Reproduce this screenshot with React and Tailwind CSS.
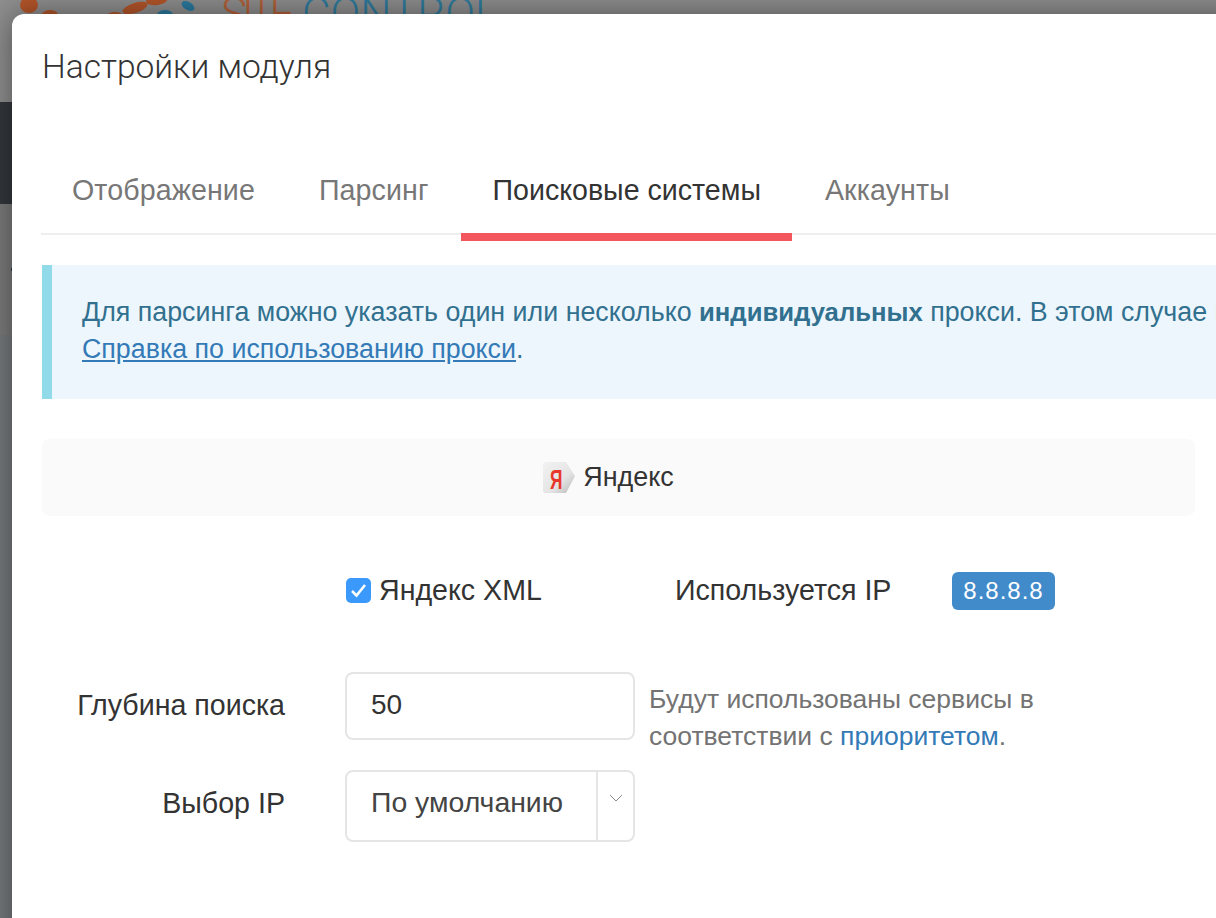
const tabs = [
  { name: "Отображение" },
  { name: "Парсинг" },
  { name: "Поисковые системы", active: true },
  { name: "Аккаунты" },
];

const YandexIcon = () => (
  <svg width="33" height="32" viewBox="0 0 33 32" className="shrink-0">
    <defs>
      <linearGradient id="tag" x1="0" y1="0" x2="1" y2="1">
        <stop offset="0" stopColor="#f2f2f2" />
        <stop offset="0.6" stopColor="#e4e4e4" />
        <stop offset="1" stopColor="#b5b5b5" />
      </linearGradient>
    </defs>
    <path d="M2 0 L23 0 L32 14 L23 31 L1 31 L0 29 L0 2 Z" fill="url(#tag)" />
    <text
      transform="translate(7 27) scale(0.62 1)"
      fontSize="28"
      fontWeight="700"
      fill="#e8382c"
      fontFamily="Liberation Sans"
    >
      Я
    </text>
  </svg>
);

export default function App() {
  return (
    <div className="relative h-[918px] w-[1216px] overflow-hidden bg-[#777a7e] font-['Liberation_Sans',sans-serif] text-[#333]">
      {/* page behind the backdrop */}
      <div className="absolute inset-x-0 top-0 h-[102px] bg-[#8f8f8f]" />
      <div className="absolute inset-x-0 top-[102px] h-[102px] bg-[#33373c]" />
      <div className="absolute inset-x-0 top-[204px] h-[131px] bg-[#7c7c7c]" />
      <svg width="200" height="20" viewBox="0 0 200 20" className="absolute left-0 top-0">
        <ellipse cx="29" cy="5" rx="9" ry="8" fill="#b5562a" />
        <ellipse cx="50" cy="15" rx="8" ry="5" fill="#b5562a" />
        <ellipse cx="115" cy="16" rx="8" ry="4" fill="#b5562a" />
        <ellipse cx="135" cy="8" rx="13" ry="5" fill="#b5562a" transform="rotate(-18 135 8)" />
        <ellipse cx="157" cy="0" rx="11" ry="5" fill="#b5562a" transform="rotate(-10 157 0)" />
        <ellipse cx="165" cy="15" rx="8" ry="5" fill="#2b7aa0" />
        <ellipse cx="188" cy="6" rx="7" ry="4" fill="#2b7aa0" transform="rotate(30 188 6)" />
      </svg>
      <div className="absolute left-[221px] top-[-8px] font-['Roboto',sans-serif] text-[44px] font-light leading-none tracking-[-5px] text-[#b5623a]">
        SITE
      </div>
      <div className="absolute left-[302px] top-[-8px] font-['Roboto',sans-serif] text-[44px] font-light leading-none text-[#2f7c9e]">
        CONTROL
      </div>
      <div className="absolute left-[11px] top-[268px] h-[3px] w-[2px] bg-[#2c3e50]" />

      <div className="absolute left-[12px] top-[14px] h-[1000px] w-[1400px] rounded-tl-[12px] bg-white pl-[30px] shadow-[0_0_32px_rgba(0,0,0,0.45)]">
        <h4 className="pt-[33px] font-['Roboto',sans-serif] text-[33.5px] font-light leading-[40px] text-[#333]">
          Настройки модуля
        </h4>

        <ul className="mt-[73px] -ml-px flex h-[75px] border-b-2 border-[#eee] text-[28.6px] leading-[40px]">
          {tabs.map((tab) => (
            <li
              key={tab.name}
              className={`mr-[2px] h-[81px] whitespace-nowrap px-[31px] pt-[10px] ${
                tab.active
                  ? "border-b-8 border-[#f4565e] text-[#333]"
                  : "tracking-[0.1px] text-[#777]"
              }`}
            >
              {tab.name}
            </li>
          ))}
        </ul>

        <div className="mt-[30px] h-[134px] border-l-[10px] border-[#90dae9] bg-[#edf6fc] pl-[30px] pt-[29px] text-[26.8px] leading-[37px] text-[#31708f]">
          <p className="whitespace-nowrap">
            Для парсинга можно указать один или несколько <b className="text-[25.7px]">индивидуальных</b> прокси. В этом случае прокси
          </p>
          <p>
            <a className="text-[#337ab7] underline">Справка по использованию прокси</a>.
          </p>
        </div>

        <div className="mt-[40px] flex h-[77px] w-[1153px] items-center justify-center gap-[7px] rounded-[8px] bg-[#fafafa] pr-[20px] text-[26.9px]">
          <YandexIcon />
          <span className="-mt-[1px]">Яндекс</span>
        </div>

        <div className="ml-[304px] mt-[55px] flex h-[40px] items-center text-[28.6px]">
          <span className="-mt-[2px] flex h-[25px] w-[25px] items-center justify-center rounded-[5px] bg-[#3b99fc]">
            <svg width="17" height="15" viewBox="0 0 17 15" fill="none">
              <path d="M2 8 L6.5 12.5 L15 2" stroke="white" strokeWidth="2.6" />
            </svg>
          </span>
          <span className="-mt-[2px] ml-[8px] w-[296px]">Яндекс XML</span>
          <span className="-mt-[2px] w-[277px]">Используется IP</span>
          <span className="flex h-[38px] w-[103px] items-center justify-center rounded-[6px] bg-[#428bca] text-[24px] font-light tracking-[1px] text-white">
            8.8.8.8
          </span>
        </div>

        <div className="mt-[61px] flex h-[68px] items-start">
          <label className="w-[243px] pt-[15px] text-right text-[28.6px] leading-[36px]">Глубина поиска</label>
          <div className="ml-[60px] flex h-[68px] w-[290px] shrink-0 items-center rounded-[8px] border-2 border-[#e5e5e5] pb-[2px] pl-[24px] text-[28px]">
            50
          </div>
          <p className="ml-[14px] w-[420px] pt-[9px] text-[26.5px] leading-[37px] text-[#737373]">
            Будут использованы сервисы в соответствии с <a className="text-[#337ab7]">приоритетом</a>.
          </p>
        </div>

        <div className="mt-[30px] flex items-start">
          <label className="w-[243px] pt-[15px] text-right text-[28.6px] leading-[36px]">Выбор IP</label>
          <div className="ml-[60px] flex h-[72px] w-[290px] rounded-[8px] border-2 border-[#e5e5e5] text-[28.4px]">
            <span className="w-[251px] whitespace-nowrap border-r-2 border-[#e5e5e5] pl-[24px] pt-[12px] leading-[36px] text-[#444]">
              По умолчанию
            </span>
            <span className="flex flex-1 justify-center pt-[22px]">
              <svg width="14" height="8" viewBox="0 0 14 8" fill="none">
                <path d="M1 1 L7 7 L13 1" stroke="#8a8a8a" strokeWidth="1" />
              </svg>
            </span>
          </div>
        </div>
      </div>
    </div>
  );
}
